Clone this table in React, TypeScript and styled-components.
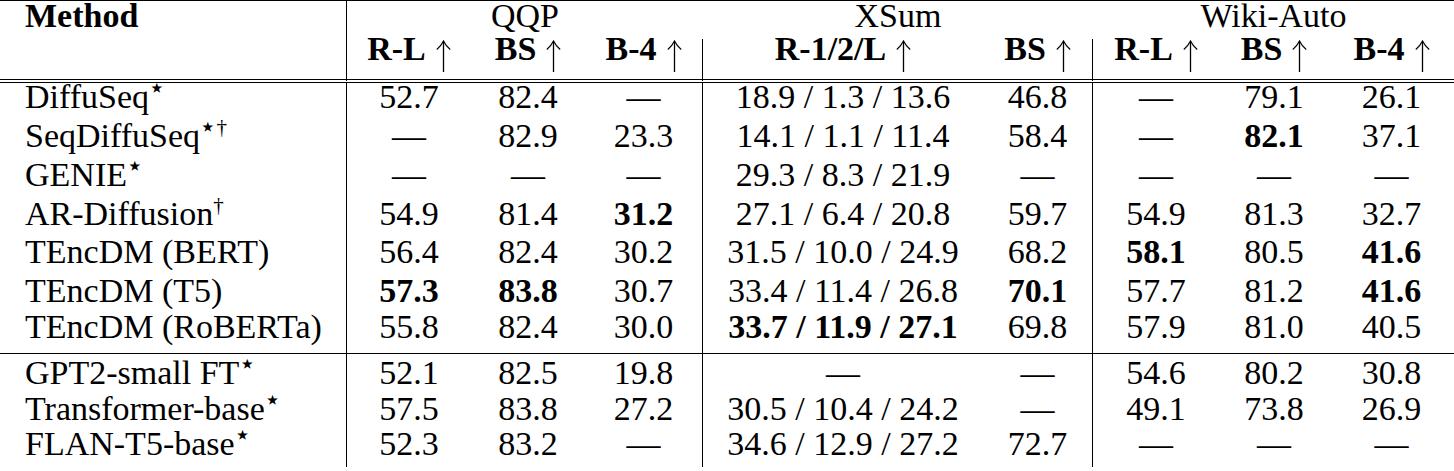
import { createGlobalStyle, styled } from 'styled-components';

const GlobalStyle = createGlobalStyle`
  body {
    margin: 0;
    background: #ffffff;
  }
`;

const Table = styled.table`
  width: 1454px;
  table-layout: fixed;
  border-collapse: separate;
  border-spacing: 0;
  border-top: 1px solid #000;
  color: #000;
`;

const Row = styled.tr<{ $h: number; $rule?: 'single' | 'double' }>`
  height: ${(p) => p.$h}px;
  & > td,
  & > th {
    border-bottom: ${(p) =>
      p.$rule === 'double' ? '4px double #000' : p.$rule === 'single' ? '1px solid #000' : 'none'};
  }
`;

const Cell = styled.td<{ $pad: number; $bold?: boolean; $left?: boolean; $line?: boolean }>`
  padding: ${(p) => p.$pad}px 0 0 ${(p) => (p.$left ? 25 : 0)}px;
  vertical-align: top;
  font-family: 'Liberation Serif', 'Times New Roman', serif;
  font-size: 34px;
  line-height: 20px;
  white-space: nowrap;
  text-align: ${(p) => (p.$left ? 'left' : 'center')};
  font-weight: ${(p) => (p.$bold ? 700 : 400)};
  border-right: ${(p) => (p.$line ? '1px solid #000' : 'none')};
`;

const Sup = styled.span<{ $star?: boolean }>`
  font-family: ${(p) => (p.$star ? "'DejaVu Sans', sans-serif" : "'Liberation Serif', serif")};
  font-size: ${(p) => (p.$star ? 28 : 21)}px;
  line-height: 0;
  margin-left: ${(p) => (p.$star ? -1 : 0)}px;
  vertical-align: ${(p) => (p.$star ? 11 : 13)}px;
`;

const ArrowIcon = styled.svg`
  display: inline-block;
  margin-left: 10px;
  vertical-align: -12px;
`;

function Up() {
  return (
    <ArrowIcon width='15' height='32' viewBox='0 0 15 32'>
      <path d='M7.5 1.5 V32' stroke='#000' strokeWidth='1.3' fill='none' />
      <path d='M0.8 9.5 Q5 6 7.5 1 Q10 6 14.2 9.5' stroke='#000' strokeWidth='1.2' fill='none' />
    </ArrowIcon>
  );
}

function Marks({ text }: { text: string }) {
  return (
    <>
      {text.split('').map((c, i) => (
        <Sup key={i} $star={c === '⋆'}>
          {c}
        </Sup>
      ))}
    </>
  );
}

type Line = {
  name: string;
  sup?: string;
  vals: string[];
  h: number;
  pad: number;
  rule?: 'single';
};

// "!" in front of a value marks it bold
const lines: Line[] = [
  { name: 'DiffuSeq', sup: '⋆', h: 39, pad: 4, vals: ['52.7', '82.4', '—', '18.9 / 1.3 / 13.6', '46.8', '—', '79.1', '26.1'] },
  { name: 'SeqDiffuSeq', sup: '⋆†', h: 39, pad: 4, vals: ['—', '82.9', '23.3', '14.1 / 1.1 / 11.4', '58.4', '—', '!82.1', '37.1'] },
  { name: 'GENIE', sup: '⋆', h: 39, pad: 4, vals: ['—', '—', '—', '29.3 / 8.3 / 21.9', '—', '—', '—', '—'] },
  { name: 'AR-Diffusion', sup: '†', h: 38, pad: 4, vals: ['54.9', '81.4', '!31.2', '27.1 / 6.4 / 20.8', '59.7', '54.9', '81.3', '32.7'] },
  { name: 'TEncDM (BERT)', h: 39, pad: 4, vals: ['56.4', '82.4', '30.2', '31.5 / 10.0 / 24.9', '68.2', '!58.1', '80.5', '!41.6'] },
  { name: 'TEncDM (T5)', h: 36, pad: 4, vals: ['!57.3', '!83.8', '30.7', '33.4 / 11.4 / 26.8', '!70.1', '57.7', '81.2', '!41.6'] },
  { name: 'TEncDM (RoBERTa)', h: 41, pad: 4, rule: 'single', vals: ['55.8', '82.4', '30.0', '!33.7 / 11.9 / 27.1', '69.8', '57.9', '81.0', '40.5'] },
  { name: 'GPT2-small FT', sup: '⋆', h: 36, pad: 9, vals: ['52.1', '82.5', '19.8', '—', '—', '54.6', '80.2', '30.8'] },
  { name: 'Transformer-base', sup: '⋆', h: 35, pad: 9, vals: ['57.5', '83.8', '27.2', '30.5 / 10.4 / 24.2', '—', '49.1', '73.8', '26.9'] },
  { name: 'FLAN-T5-base', sup: '⋆', h: 42, pad: 9, vals: ['52.3', '83.2', '—', '34.6 / 12.9 / 27.2', '72.7', '—', '—', '—'] },
];

const widths = [347, 124, 114, 118, 280, 110, 126, 110, 125];
const metrics = ['R-L', 'BS', 'B-4', 'R-1/2/L', 'BS', 'R-L', 'BS', 'B-4'];
// columns followed by a vertical rule
const ruled = [2, 4];

export default function App() {
  return (
    <>
      <GlobalStyle />
      <Table>
        <colgroup>
          {widths.map((w, i) => (
            <col key={i} width={w} />
          ))}
        </colgroup>
        <thead>
          <Row $h={38}>
            <Cell as='th' $pad={5} $left $bold $line>
              Method
            </Cell>
            <Cell as='th' $pad={5} colSpan={3}>
              QQP
            </Cell>
            <Cell as='th' $pad={5} colSpan={2}>
              XSum
            </Cell>
            <Cell as='th' $pad={5} colSpan={3}>
              Wiki-Auto
            </Cell>
          </Row>
          <Row $h={44} $rule='double'>
            <Cell as='th' $pad={0} $line />
            {metrics.map((m, i) => (
              <Cell as='th' key={i} $pad={0} $bold $line={ruled.includes(i)}>
                {m}
                <Up />
              </Cell>
            ))}
          </Row>
        </thead>
        <tbody>
          {lines.map((l) => (
            <Row key={l.name} $h={l.h} $rule={l.rule}>
              <Cell $pad={l.pad} $left $line>
                {l.name}
                {l.sup && <Marks text={l.sup} />}
              </Cell>
              {l.vals.map((v, i) => (
                <Cell key={i} $pad={l.pad} $bold={v.startsWith('!')} $line={ruled.includes(i)}>
                  {v.replace('!', '')}
                </Cell>
              ))}
            </Row>
          ))}
        </tbody>
      </Table>
    </>
  );
}
